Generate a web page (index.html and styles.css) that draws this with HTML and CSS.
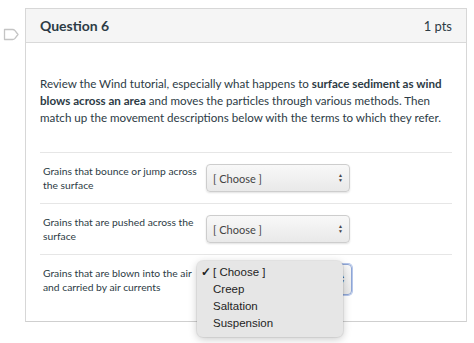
FILE: index.html
```html
<!DOCTYPE html>
<html lang="en">
<head>
    <meta charset="UTF-8">
    <meta name="viewport" content="width=device-width, initial-scale=1.0">
    <title>Question 6</title>
    <link rel="stylesheet" href="styles.css">
</head>
<body>
    <div class="page">
        <div class="flag">
            <svg width="20" height="14" viewBox="0 0 20 14">
                <path d="M3.5 1.5 H11.5 Q13 1.5 14 2.6 L17 6.5 L14 10.4 Q13 11.5 11.5 11.5 H3.5 Z" fill="none" stroke="#c4c4c4" stroke-width="1.3" stroke-linejoin="round"/>
            </svg>
        </div>

        <div class="card">
            <div class="card-header">
                <span class="q-title">Question 6</span>
                <span class="q-pts">1 pts</span>
            </div>

            <div class="card-body">
                <p class="prompt">Review the Wind tutorial, especially what happens to <b>surface sediment as wind blows across an area</b> and moves the particles through various methods. Then match up the movement descriptions below with the terms to which they refer.</p>

                <div class="answers">
                    <div class="answer-row">
                        <div class="answer-label">Grains that bounce or jump across the surface</div>
                        <div class="choose">
                            <span>[ Choose ]</span>
                            <span class="arrows">&#9650;<br>&#9660;</span>
                        </div>
                    </div>
                    <div class="answer-row">
                        <div class="answer-label">Grains that are pushed across the surface</div>
                        <div class="choose">
                            <span>[ Choose ]</span>
                            <span class="arrows">&#9650;<br>&#9660;</span>
                        </div>
                    </div>
                    <div class="answer-row">
                        <div class="answer-label">Grains that are blown into the air and carried by air currents</div>
                        <div class="choose focused">
                            <span>[ Choose ]</span>
                            <span class="arrows">&#9650;<br>&#9660;</span>
                        </div>
                        <ul class="menu">
                            <li class="checked"><span class="tick">&#10003;</span>[ Choose ]</li>
                            <li>Creep</li>
                            <li>Saltation</li>
                            <li>Suspension</li>
                        </ul>
                    </div>
                </div>
            </div>
        </div>
    </div>
</body>
</html>
```

FILE: styles.css
```css
html, body {
    height: 100%;
}
body {
    margin: 0; padding: 0; min-height: 343px; background-color: #fff; font-family: Lato, "Open Sans", sans-serif; color: #2d3b45;
}
.page {
    display: flex; padding-top: 8px;
}
.flag {
    width: 25px; padding-top: 18px; padding-left: 1px; box-sizing: border-box;
}
.card {
    width: 442px; border: 1px solid #d7d7d7; border-bottom-color: #cfcfcf; box-sizing: border-box;
}
.card-header {
    display: flex; justify-content: space-between; align-items: center; height: 33px; padding: 0 14px; background-color: #f5f5f5; border-bottom: 1px solid #d9d9d9;
}
.q-title {
    font-size: 14px; font-weight: bold; color: #2d3b45;
}
.q-pts {
    font-size: 13px; color: #2d3b45;
}
.card-body {
    padding: 32px 14px 16px 14px;
}
.prompt {
    margin: 0; font-size: 11.6px; line-height: 17px; color: #2d3b45;
}
.prompt b {
    font-weight: bold;
}
.answers {
    margin-top: 26px;
}
.answer-row {
    position: relative; display: flex; align-items: center; height: 50px; padding-left: 3px; border-top: 1px solid #e6e6e6;
}
.answer-label {
    width: 163px; font-size: 10.3px; line-height: 14.5px; color: #2d3b45;
}
.choose {
    display: flex; justify-content: space-between; align-items: center; width: 144px; height: 28px; padding: 0 6px 0 6px; box-sizing: border-box; border: 1px solid #cdcdcd; border-radius: 4px; background: linear-gradient(#f8f8f8, #e9e9e9); box-shadow: 0 1px 2px rgba(0, 0, 0, 0.12); font-size: 11px; color: #444;
}
.choose.focused {
    width: 146px; height: 31px; margin-top: -2px; border-color: #8fa6d6; box-shadow: 0 0 0 1px #b5c6ea;
}
.arrows {
    font-size: 5px; line-height: 5px; color: #444; text-align: center;
}
.menu {
    position: absolute; z-index: 5; left: 157px; top: 6px; width: 146px; margin: 0; padding: 3px 0 5px 0; list-style: none; background-color: #e6e6e6; border-radius: 6px; box-shadow: 0 2px 8px rgba(0, 0, 0, 0.22), 0 0 0 1px rgba(0, 0, 0, 0.06); font-family: "Liberation Sans", Arial, sans-serif; font-size: 11.5px; color: #1e1e1e;
}
.menu li {
    height: 17px; line-height: 17px; padding-left: 16px; position: relative;
}
.tick {
    position: absolute; left: 4px; font-size: 12px; font-weight: bold;
}
```
